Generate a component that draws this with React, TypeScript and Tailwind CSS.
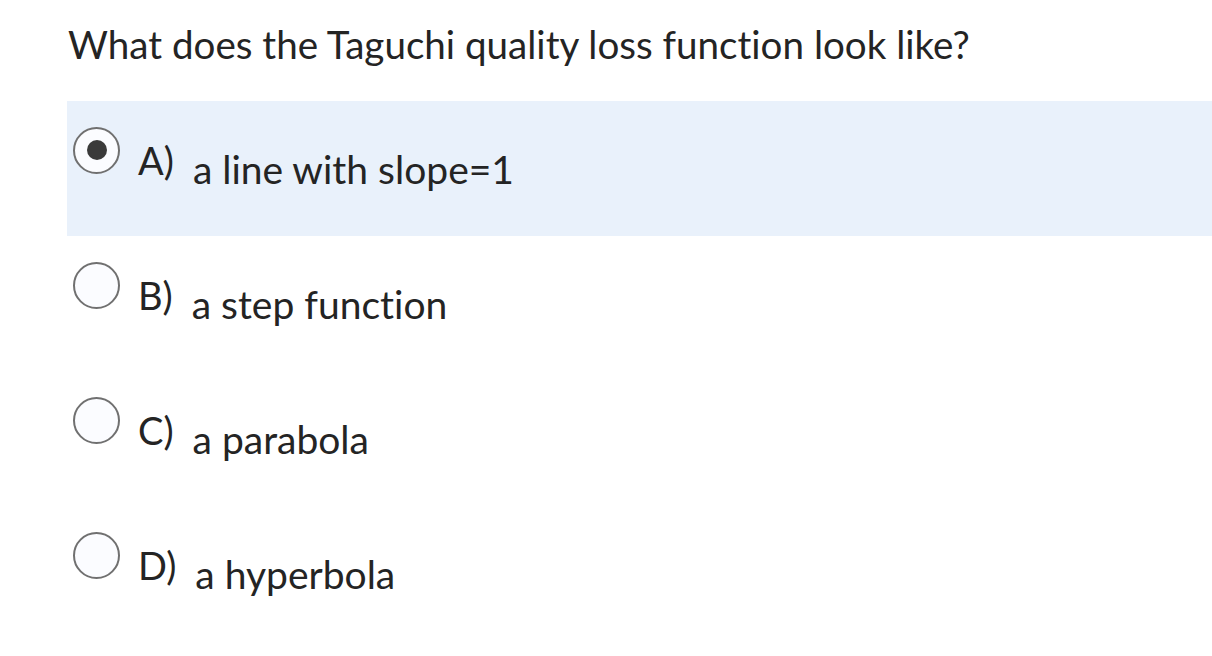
import { useState } from "react";

const options = [
  { key: "A)", text: "a line with slope=1" },
  { key: "B)", text: "a step function" },
  { key: "C)", text: "a parabola" },
  { key: "D)", text: "a hyperbola" },
];

export default function App() {
  const [selected, setSelected] = useState(0);

  return (
    <div className="min-h-screen bg-white pl-[67px] text-[#242424] font-['Lato',sans-serif] [font-variant-ligatures:none]">
      <h1 className="pt-[25px] pl-[1px] text-[38.6px] leading-none font-normal">
        What does the Taguchi quality loss function look like?
      </h1>

      <div className="mt-[37px]">
        {options.map((opt, i) => (
          <label
            key={opt.key}
            className={`flex h-[135px] cursor-pointer ${selected === i ? "bg-[#e9f1fb]" : ""}`}
            onClick={() => setSelected(i)}
          >
            <span className="mt-[26px] ml-[6px] flex h-[47px] w-[47px] shrink-0 items-center justify-center rounded-full border-2 border-[#707070] bg-[#fbfcff]">
              {selected === i && <span className="h-[20px] w-[20px] rounded-full bg-[#3a3a3a]" />}
            </span>
            <span className="ml-[18px] mt-[40px] text-[38px] leading-none">{opt.key}</span>
            <span className="ml-[19px] mt-[49px] text-[39px] leading-none">{opt.text}</span>
          </label>
        ))}
      </div>
    </div>
  );
}
